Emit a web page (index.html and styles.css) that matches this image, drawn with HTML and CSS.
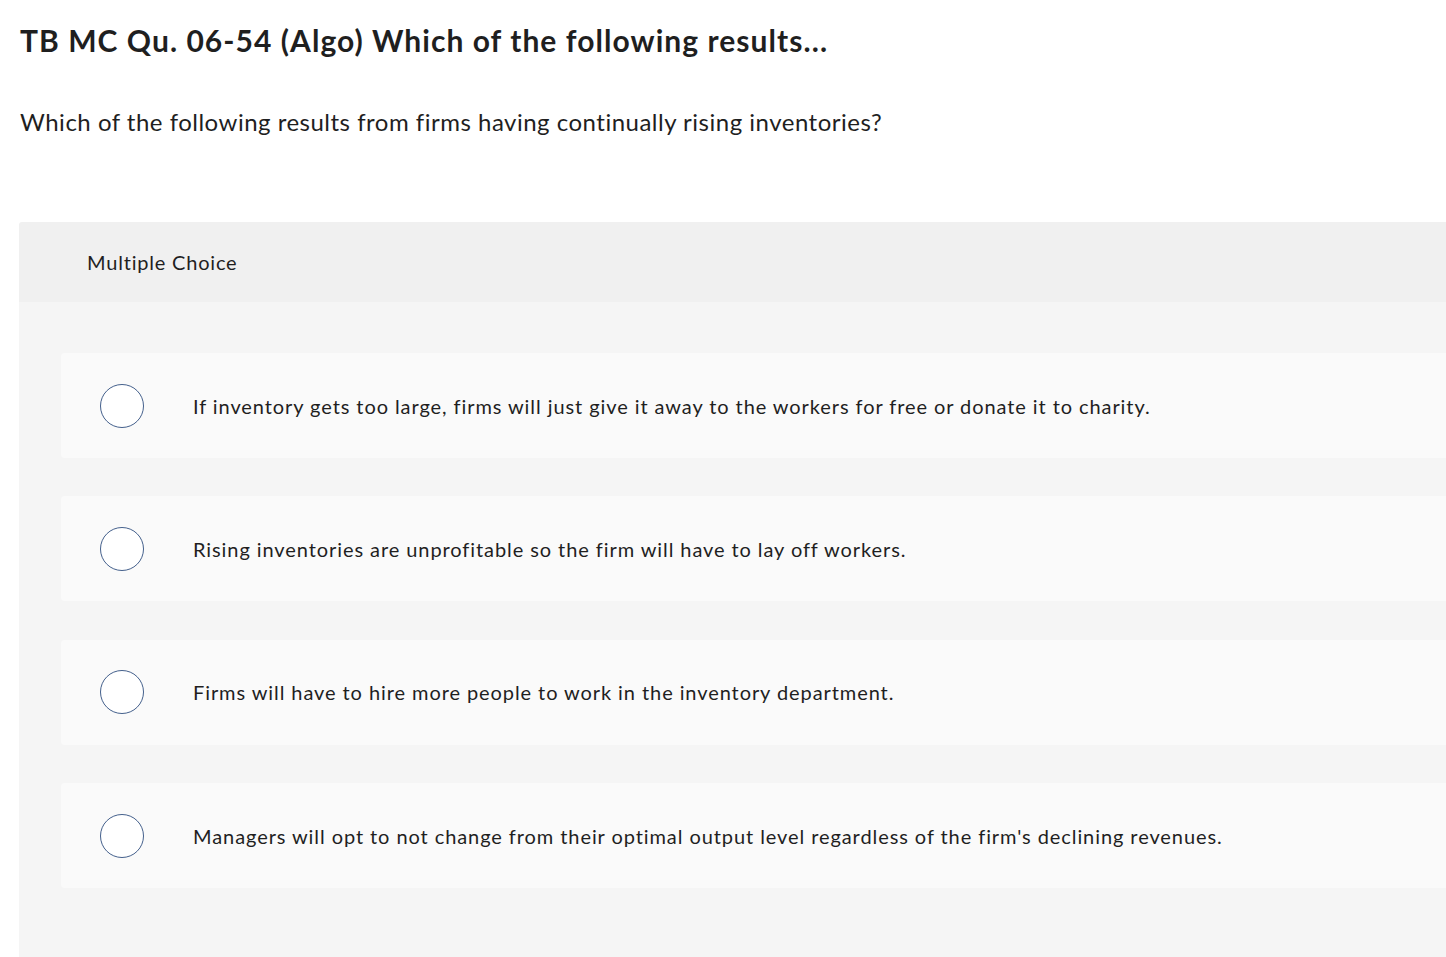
FILE: index.html
```html
<!DOCTYPE html>
<html lang="en">
<head>
<meta charset="utf-8">
<title>TB MC Qu. 06-54 (Algo)</title>
<link rel="stylesheet" href="styles.css">
</head>
<body>
<main class="page">
  <h1 class="title">TB MC Qu. 06-54 (Algo) Which of the following results...</h1>
  <p class="prompt">Which of the following results from firms having continually rising inventories?</p>
  <section class="mc">
    <header class="mc-head">Multiple Choice</header>
    <div class="mc-body">
      <label class="option"><span class="radio"></span><span class="opt-text">If inventory gets too large, firms will just give it away to the workers for free or donate it to charity.</span></label>
      <label class="option"><span class="radio"></span><span class="opt-text">Rising inventories are unprofitable so the firm will have to lay off workers.</span></label>
      <label class="option"><span class="radio"></span><span class="opt-text">Firms will have to hire more people to work in the inventory department.</span></label>
      <label class="option"><span class="radio"></span><span class="opt-text">Managers will opt to not change from their optimal output level regardless of the firm's declining revenues.</span></label>
    </div>
  </section>
</main>
</body>
</html>
```
FILE: styles.css
```css
html, body {
  margin: 0;
  padding: 0;
  background: #ffffff;
}
body {
  font-family: Lato, "Open Sans", "Liberation Sans", sans-serif;
  color: #1f1f1f;
}
.page {
  padding: 20px 0 0 19px;
}
.title {
  margin: 0 0 0 1px;
  font-size: 30px;
  line-height: 40px;
  font-weight: 700;
  letter-spacing: 1.05px;
  color: #1f1f1f;
}
.prompt {
  margin: 47px 0 0 1px;
  font-size: 24px;
  line-height: 30px;
  letter-spacing: 0.5px;
  font-weight: 400;
}
.mc {
  margin-top: 85px;
  border-radius: 3px 0 0 0;
  overflow: hidden;
}
.mc-head {
  background: #f0f0f0;
  height: 80px;
  display: flex;
  align-items: center;
  padding-left: 68px;
  font-size: 20px;
  letter-spacing: 0.8px;
}
.mc-body {
  background: #f5f5f5;
  padding: 51px 0 80px 42px;
  display: flex;
  flex-direction: column;
  gap: 38.4px;
}
.option {
  background: #fafafa;
  border-radius: 4px 0 0 4px;
  height: 105px;
  display: flex;
  align-items: center;
  padding-left: 39px;
  cursor: pointer;
}
.radio {
  width: 42px;
  height: 42px;
  border: 1.5px solid #44608c;
  border-radius: 50%;
  background: #ffffff;
  flex: none;
}
.opt-text {
  margin-left: 49px;
  font-size: 20px;
  letter-spacing: 0.92px;
}
```
